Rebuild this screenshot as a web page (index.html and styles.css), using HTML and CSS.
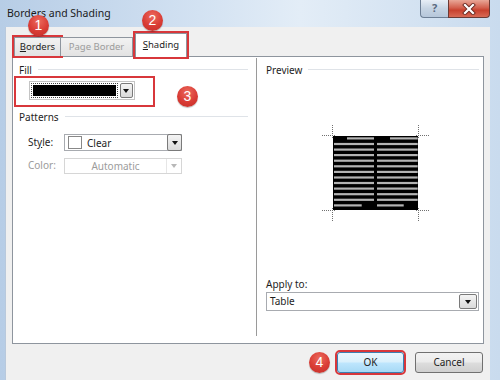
FILE: index.html
```html
<!DOCTYPE html>
<html>
<head>
<meta charset="utf-8">
<link rel="stylesheet" href="styles.css">
</head>
<body>
<div class="window">
  <div class="titlebar">
    <span class="title">Borders and Shading</span>
    <div class="caption-btns">
      <div class="cap-help">?</div>
      <div class="cap-close">
        <svg width="14" height="12" viewBox="0 0 14 12">
          <path d="M3 2 L11 10 M11 2 L3 10" stroke="#6b2a22" stroke-width="4" stroke-linecap="square"/>
          <path d="M3 2 L11 10 M11 2 L3 10" stroke="#ffffff" stroke-width="2.2" stroke-linecap="square"/>
        </svg>
      </div>
    </div>
  </div>
  <div class="client">
    <div class="tabs">
      <div class="tab tab-borders hl"><span class="ul">B</span>orders<span class="badge badge-1">1</span></div>
      <div class="tab tab-page disabled">Page Border</div>
      <div class="tab tab-shading active hl"><span class="ul">S</span>hading<span class="badge badge-2">2</span></div>
    </div>
    <div class="panel">
      <div class="col-left">
        <div class="group-h"><span>Fill</span><i class="rule"></i></div>
        <div class="fill-row">
          <div class="fill-hl">
            <div class="fill-combo">
              <div class="swatch-wrap"><div class="swatch"></div></div>
              <div class="arrow-btn"><i class="tri"></i></div>
            </div>
          </div>
          <span class="badge badge-3">3</span>
        </div>
        <div class="group-h patterns-h"><span>Patterns</span><i class="rule"></i></div>
        <div class="form-grid">
          <label class="flabel">St<span class="ul">y</span>le:</label>
          <div class="combo style-combo">
            <i class="clear-box"></i><span class="ctext">Clear</span>
            <div class="arrow-btn"><i class="tri"></i></div>
          </div>
          <label class="flabel disabled-text">Color:</label>
          <div class="combo color-combo">
            <span class="ctext center">Automatic</span>
            <div class="arrow-flat"><i class="tri gray"></i></div>
          </div>
        </div>
      </div>
      <div class="separator"></div>
      <div class="col-right">
        <div class="group-h"><span>Preview</span><i class="rule"></i></div>
        <svg class="preview" width="114" height="102" viewBox="0 0 114 102">
          <rect x="14" y="14" width="85" height="74" fill="#000"/>
          <g fill="#b4b4b4">
            <rect x="28" y="15.3" width="27" height="2.2"/>
            <rect x="71" y="15.3" width="27.7" height="2.2"/>
            <rect x="15" y="20.9" width="40" height="2.2"/><rect x="58" y="20.9" width="40.7" height="2.2"/>
            <rect x="15" y="26.5" width="40" height="2.2"/><rect x="58" y="26.5" width="40.7" height="2.2"/>
            <rect x="15" y="32.0" width="40" height="2.2"/><rect x="58" y="32.0" width="40.7" height="2.2"/>
            <rect x="15" y="37.6" width="40" height="2.2"/><rect x="58" y="37.6" width="40.7" height="2.2"/>
            <rect x="15" y="43.2" width="40" height="2.2"/><rect x="58" y="43.2" width="40.7" height="2.2"/>
            <rect x="15" y="48.8" width="40" height="2.2"/><rect x="58" y="48.8" width="40.7" height="2.2"/>
            <rect x="15" y="54.4" width="40" height="2.2"/><rect x="58" y="54.4" width="40.7" height="2.2"/>
            <rect x="15" y="59.9" width="40" height="2.2"/><rect x="58" y="59.9" width="40.7" height="2.2"/>
            <rect x="15" y="65.5" width="40" height="2.2"/><rect x="58" y="65.5" width="40.7" height="2.2"/>
            <rect x="15" y="71.1" width="40" height="2.2"/><rect x="58" y="71.1" width="40.7" height="2.2"/>
            <rect x="15" y="76.7" width="40" height="2.2"/><rect x="58" y="76.7" width="40.7" height="2.2"/>
            <rect x="15" y="82.3" width="27.7" height="2.2"/><rect x="58" y="82.3" width="26.7" height="2.2"/>
          </g>
          <g stroke="#707070" stroke-width="1" stroke-dasharray="1 1" fill="none">
            <path d="M3 13.5 H16 M13.5 3 V16"/>
            <path d="M97 13.5 H110 M99.5 3 V16"/>
            <path d="M3 88.5 H16 M13.5 86 V99"/>
            <path d="M97 88.5 H110 M99.5 86 V99"/>
          </g>
        </svg>
        <div class="apply-label">Apply to:</div>
        <div class="combo apply-combo">
          <span class="ctext">Table</span>
          <div class="arrow-btn"><i class="tri"></i></div>
        </div>
      </div>
    </div>
    <div class="buttons">
      <div class="btn btn-ok hl">OK<span class="badge badge-4">4</span></div>
      <div class="btn btn-cancel">Cancel</div>
    </div>
  </div>
</div>
</body>
</html>
```
FILE: styles.css
```css
* { box-sizing: border-box; }
html, body { margin: 0; padding: 0; }
body {
  width: 500px;
  height: 380px;
  overflow: hidden;
  font-family: "Noto Sans", "Open Sans", sans-serif;
  font-size: 10px;
  color: #1e1e1e;
  background: #c8daee;
}
.window {
  width: 500px;
  height: 380px;
  display: flex;
  flex-direction: column;
  background: linear-gradient(90deg, #b7cde6 0%, #d3e2f2 40%, #e3edf7 60%, #c9dbee 100%);
}
.titlebar {
  height: 27px;
  display: flex;
  justify-content: space-between;
  align-items: flex-start;
  padding-left: 7px;
  padding-right: 10px;
  flex: none;
}
.title {
  font-size: 10.5px;
  line-height: 27px;
  color: #1a1a1a;
}
.caption-btns { display: flex; }
.cap-help {
  width: 28px;
  height: 18px;
  border: 1px solid #6d7f95;
  border-top: none;
  border-right: none;
  border-radius: 0 0 0 4px;
  background: linear-gradient(#e7eef6, #c6d4e3 50%, #b6c7da);
  color: #5a6a80;
  font-size: 11px;
  font-weight: bold;
  text-align: center;
  line-height: 16px;
}
.cap-close {
  width: 42px;
  height: 18px;
  border: 1px solid #6b3a34;
  border-top: none;
  border-radius: 0 0 4px 0;
  background: linear-gradient(#e9a797, #d3614f 45%, #c8412e 60%, #d86a55);
  display: flex;
  align-items: center;
  justify-content: center;
}
.client {
  flex: 1;
  margin: 0 10px 0 5px;
  background: #f0f0f0;
  padding: 6px 7px 0 6px;
  display: flex;
  flex-direction: column;
  border-left: 1px solid #b9c9dc;
}
.tabs {
  display: flex;
  align-items: flex-end;
  padding-left: 2px;
  height: 23px;
  position: relative;
  z-index: 2;
}
.tab {
  position: relative;
  height: 19px;
  font-size: 9.5px;
  line-height: 18px;
  text-align: center;
  border: 1px solid #8e959e;
  border-bottom: none;
  background: linear-gradient(#f2f2f2, #e2e2e2);
}
.tab-borders { width: 47px; }
.tab-page { width: 72px; border-left: none; color: #9c9c9c; }
.tab-shading {
  width: 52px;
  height: 24px;
  margin-left: 2px;
  margin-bottom: -1px;
  background: #ffffff;
  line-height: 22px;
}
.ul { text-decoration: underline; text-underline-offset: 1px; }
.hl { outline: 2.5px solid #d8373b; outline-offset: 0px; }
.tab-borders.hl { outline-offset: 0px; }
.badge {
  position: absolute;
  width: 21px;
  height: 21px;
  border-radius: 50%;
  background: radial-gradient(circle at 50% 30%, #ec6a5d 0%, #d93c35 55%, #c22d27 100%);
  color: #fff;
  font-family: "Liberation Sans", Arial, sans-serif;
  font-size: 14px;
  line-height: 21px;
  text-align: center;
  text-decoration: none;
  box-shadow: 0 1px 1px rgba(0,0,0,0.25);
  z-index: 5;
}
.badge-1 { left: 13px; top: -23px; }
.badge-2 { left: 6px; top: -24px; }
.badge-3 { left: 158px; top: 10px; }
.badge-4 { left: -29px; top: -1px; }
.panel {
  height: 288px;
  border: 1px solid #8e959e;
  background: #ffffff;
  display: flex;
  position: relative;
  z-index: 1;
  width: 472px;
}
.col-left {
  width: 243px;
  padding: 6px 8px 0 6px;
  flex: none;
}
.separator {
  width: 1px;
  background: #9a9a9a;
  margin: 1px 0 7px 0;
  flex: none;
}
.col-right {
  flex: 1;
  padding: 6px 6px 0 9px;
}
.group-h {
  display: flex;
  align-items: center;
  height: 14px;
  line-height: 14px;
  color: #1e1e1e;
}
.group-h .rule {
  flex: 1;
  height: 1px;
  background: #dfe3e8;
  margin-left: 6px;
  margin-top: -1px;
}
.fill-row { position: relative; height: 31px; margin-top: -1px; }
.fill-hl {
  margin-left: -5px;
  width: 141px;
  height: 31px;
  border: 2.5px solid #d8373b;
  padding: 3px 0 0 12.5px;
}
.fill-combo {
  width: 106px;
  height: 19px;
  border: 1px solid #c4c4c4;
  display: flex;
  background: #fff;
  padding: 1px;
}
.swatch-wrap {
  flex: 1;
  border: 1px dotted #444;
  padding: 1px;
  margin-right: 2px;
}
.swatch { width: 100%; height: 100%; background: #000; }
.arrow-btn {
  width: 13px;
  border: 1px solid #7a7a7a;
  border-radius: 2px;
  background: linear-gradient(#f4f4f4, #dadada);
  display: flex;
  align-items: center;
  justify-content: center;
  flex: none;
}
.tri {
  width: 0;
  height: 0;
  border-left: 3.5px solid transparent;
  border-right: 3.5px solid transparent;
  border-top: 4px solid #111;
}
.tri.gray { border-top-color: #b8b8b8; }
.patterns-h { margin-top: 3px; }
.form-grid {
  display: grid;
  grid-template-columns: 36px 118px;
  row-gap: 6px;
  margin-left: 9px;
  margin-top: 10px;
  align-items: center;
}
.flabel { line-height: 17px; }
.disabled-text { color: #9c9c9c; }
.combo {
  height: 17px;
  border: 1px solid #a8abb0;
  background: #fff;
  display: flex;
  align-items: stretch;
}
.combo .ctext { flex: 1; line-height: 15px; padding-left: 4px; }
.combo .ctext.center { text-align: center; padding-left: 0; color: #9c9c9c; }
.style-combo .arrow-btn { width: 15px; margin: -1px -1px -1px 0; }
.clear-box {
  width: 14px;
  height: 13px;
  border: 1px solid #888;
  background: #fff;
  margin: 1px 0 0 3px;
}
.style-combo .ctext { padding-left: 5px; line-height: 16px; }
.color-combo { height: 16px; border-color: #d6d6d6; }
.arrow-flat {
  width: 15px;
  display: flex;
  align-items: center;
  justify-content: center;
  border-left: 1px solid #e6e6e6;
}
.preview { display: block; margin: 45px 0 0 53px; }
.apply-label { margin-top: 53px; line-height: 14px; }
.apply-combo { width: 213px; height: 19px; margin-top: 1px; }
.apply-combo .ctext { line-height: 17px; padding-left: 3px; }
.apply-combo .arrow-btn { width: 18px; margin: 1px 1px 1px 0; }
.buttons {
  display: flex;
  justify-content: flex-end;
  gap: 11px;
  margin-top: 8px;
  padding-right: 0;
}
.btn {
  position: relative;
  height: 21px;
  border: 1px solid #707070;
  border-radius: 3px;
  text-align: center;
  line-height: 19px;
  font-size: 10px;
  background: linear-gradient(#f2f2f2 0%, #ebebeb 48%, #dddddd 52%, #cfcfcf 100%);
}
.btn-ok {
  width: 67px;
  border-color: #3c7fb1;
  background: linear-gradient(#eaf6fd 0%, #d9f0fc 48%, #bee6fd 52%, #a7d9f5 100%);
}
.btn-cancel { width: 68px; }
```
